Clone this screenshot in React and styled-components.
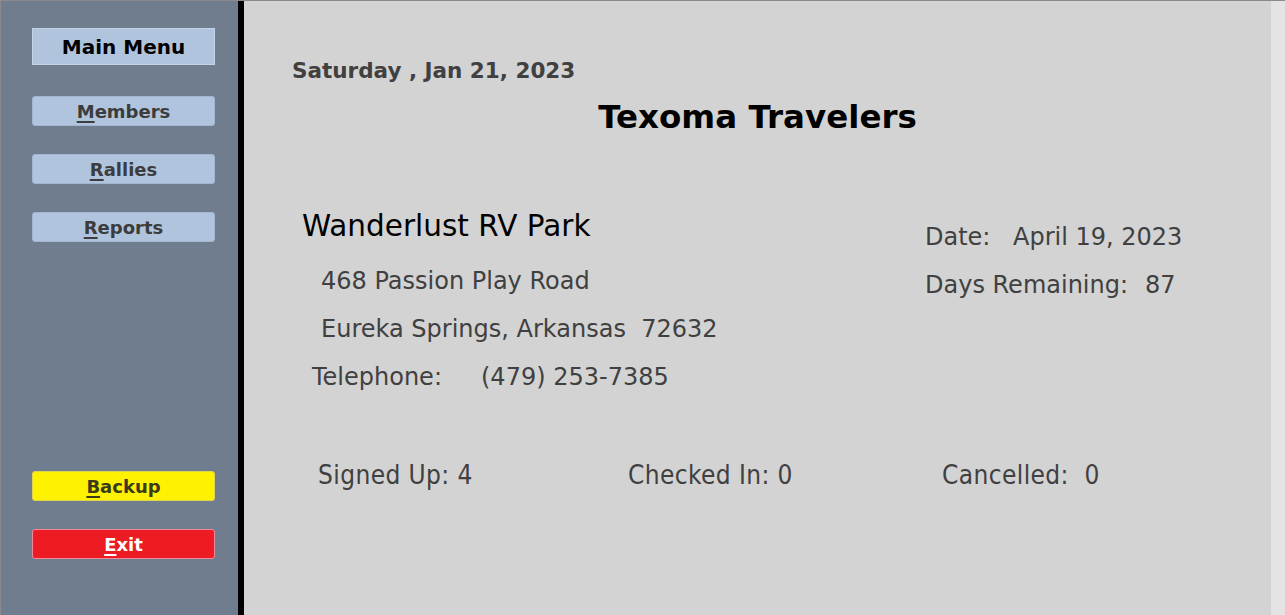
import React from 'react';
import styled, {createGlobalStyle} from 'styled-components';

const GlobalStyle = createGlobalStyle`
  html, body {
    margin: 0;
    padding: 0;
    background: #d3d3d3;
  }
  body {
    font-family: "DejaVu Sans", Verdana, sans-serif;
  }
`;

const Frame = styled.div`
  display: flex;
  width: 1285px;
  height: 615px;
  box-sizing: border-box;
  border-top: 1px solid #8a8a8a;
  border-left: 1px solid #8a8a8a;
  overflow: hidden;
`;

const Sidebar = styled.nav`
  width: 243px;
  flex: none;
  box-sizing: border-box;
  background: #6f7d8e;
  border-right: 6px solid #000;
  display: flex;
  flex-direction: column;
  padding: 27px 0 0 31px;
`;

const MenuTitle = styled.div`
  width: 181px;
  height: 35px;
  display: flex;
  align-items: center;
  justify-content: center;
  background: #b0c4de;
  border: 1px solid #c5d3e6;
  font-size: 20px;
  font-weight: bold;
  color: #000;
  margin-bottom: 31px;
`;

const MenuButton = styled.button`
  width: 183px;
  height: 30px;
  padding: 0;
  border-radius: 3px;
  border: 1px solid ${p => p.$border || '#a3b6d0'};
  background: ${p => p.$bg || '#b0c4de'};
  color: ${p => p.$color || '#3c3c3c'};
  font-family: "DejaVu Sans", Verdana, sans-serif;
  font-weight: bold;
  font-size: 18px;
  display: flex;
  align-items: center;
  justify-content: center;
  margin-bottom: ${p => p.$gap || 28}px;
  cursor: pointer;

  u {
    text-decoration-thickness: 2px;
    text-underline-offset: 3px;
  }
`;

const Main = styled.main`
  flex: 1;
  background: #d3d3d3;
  display: flex;
  flex-direction: column;
  padding: 56px 0 0 48px;
  border-right: 14px solid #e4e4e4;
`;

const Today = styled.div`
  font-weight: bold;
  font-size: 21.5px;
  line-height: 28px;
  color: #404040;
`;

const Title = styled.h1`
  margin: 12px 0 0 -48px;
  text-align: center;
  font-size: 32.5px;
  line-height: 40px;
  font-weight: bold;
  color: #000;
`;

const InfoRow = styled.div`
  display: flex;
  margin-top: 71px;
  padding-left: 10px;
`;

const Venue = styled.div`
  width: 623px;
  display: flex;
  flex-direction: column;
`;

const VenueName = styled.div`
  font-size: 29.5px;
  line-height: 36px;
  color: #000;
  margin-bottom: 13px;
`;

const Line = styled.div`
  font-size: 24px;
  color: #404040;
  line-height: 48px;
  padding-left: ${p => p.$indent || 0}px;
  display: flex;
  white-space: pre;
`;

const Label = styled.span`
  width: ${p => p.$w}px;
  flex: none;
`;

const Schedule = styled.div`
  display: flex;
  flex-direction: column;
  padding-top: 5px;
`;

const Stats = styled.div`
  display: flex;
  margin-top: 59px;
  padding-left: 26px;
`;

const Stat = styled.div`
  width: ${p => p.$w}px;
  font-family: "DejaVu Sans Condensed", "DejaVu Sans", sans-serif;
  font-size: 26px;
  letter-spacing: 0.4px;
  color: #404040;
  white-space: pre;
`;

const Key = ({k, rest}) => (
  <>
    <u>{k}</u>{rest}
  </>
);

const App = () => {
  return (
    <>
      <GlobalStyle/>
      <Frame>
        <Sidebar>
          <MenuTitle>Main Menu</MenuTitle>
          <MenuButton><Key k="M" rest="embers"/></MenuButton>
          <MenuButton><Key k="R" rest="allies"/></MenuButton>
          <MenuButton $gap={229}><Key k="R" rest="eports"/></MenuButton>
          <MenuButton $bg="#fff200" $border="#e0d44a" $color="#3a3a1a"><Key k="B" rest="ackup"/></MenuButton>
          <MenuButton $bg="#ed1c24" $border="#f08a9a" $color="#fff"><Key k="E" rest="xit"/></MenuButton>
        </Sidebar>
        <Main>
          <Today>Saturday , Jan 21, 2023</Today>
          <Title>Texoma Travelers</Title>
          <InfoRow>
            <Venue>
              <VenueName>Wanderlust RV Park</VenueName>
              <Line $indent={19}>468 Passion Play Road</Line>
              <Line $indent={19}>Eureka Springs, Arkansas  72632</Line>
              <Line $indent={10}><Label $w={169}>Telephone:</Label>(479) 253-7385</Line>
            </Venue>
            <Schedule>
              <Line><Label $w={88}>Date:</Label>April 19, 2023</Line>
              <Line><Label $w={220}>Days Remaining:</Label>87</Line>
            </Schedule>
          </InfoRow>
          <Stats>
            <Stat $w={310}>Signed Up: 4</Stat>
            <Stat $w={314}>Checked In: 0</Stat>
            <Stat $w={200}>Cancelled:  0</Stat>
          </Stats>
        </Main>
      </Frame>
    </>
  );
}

export default App;
